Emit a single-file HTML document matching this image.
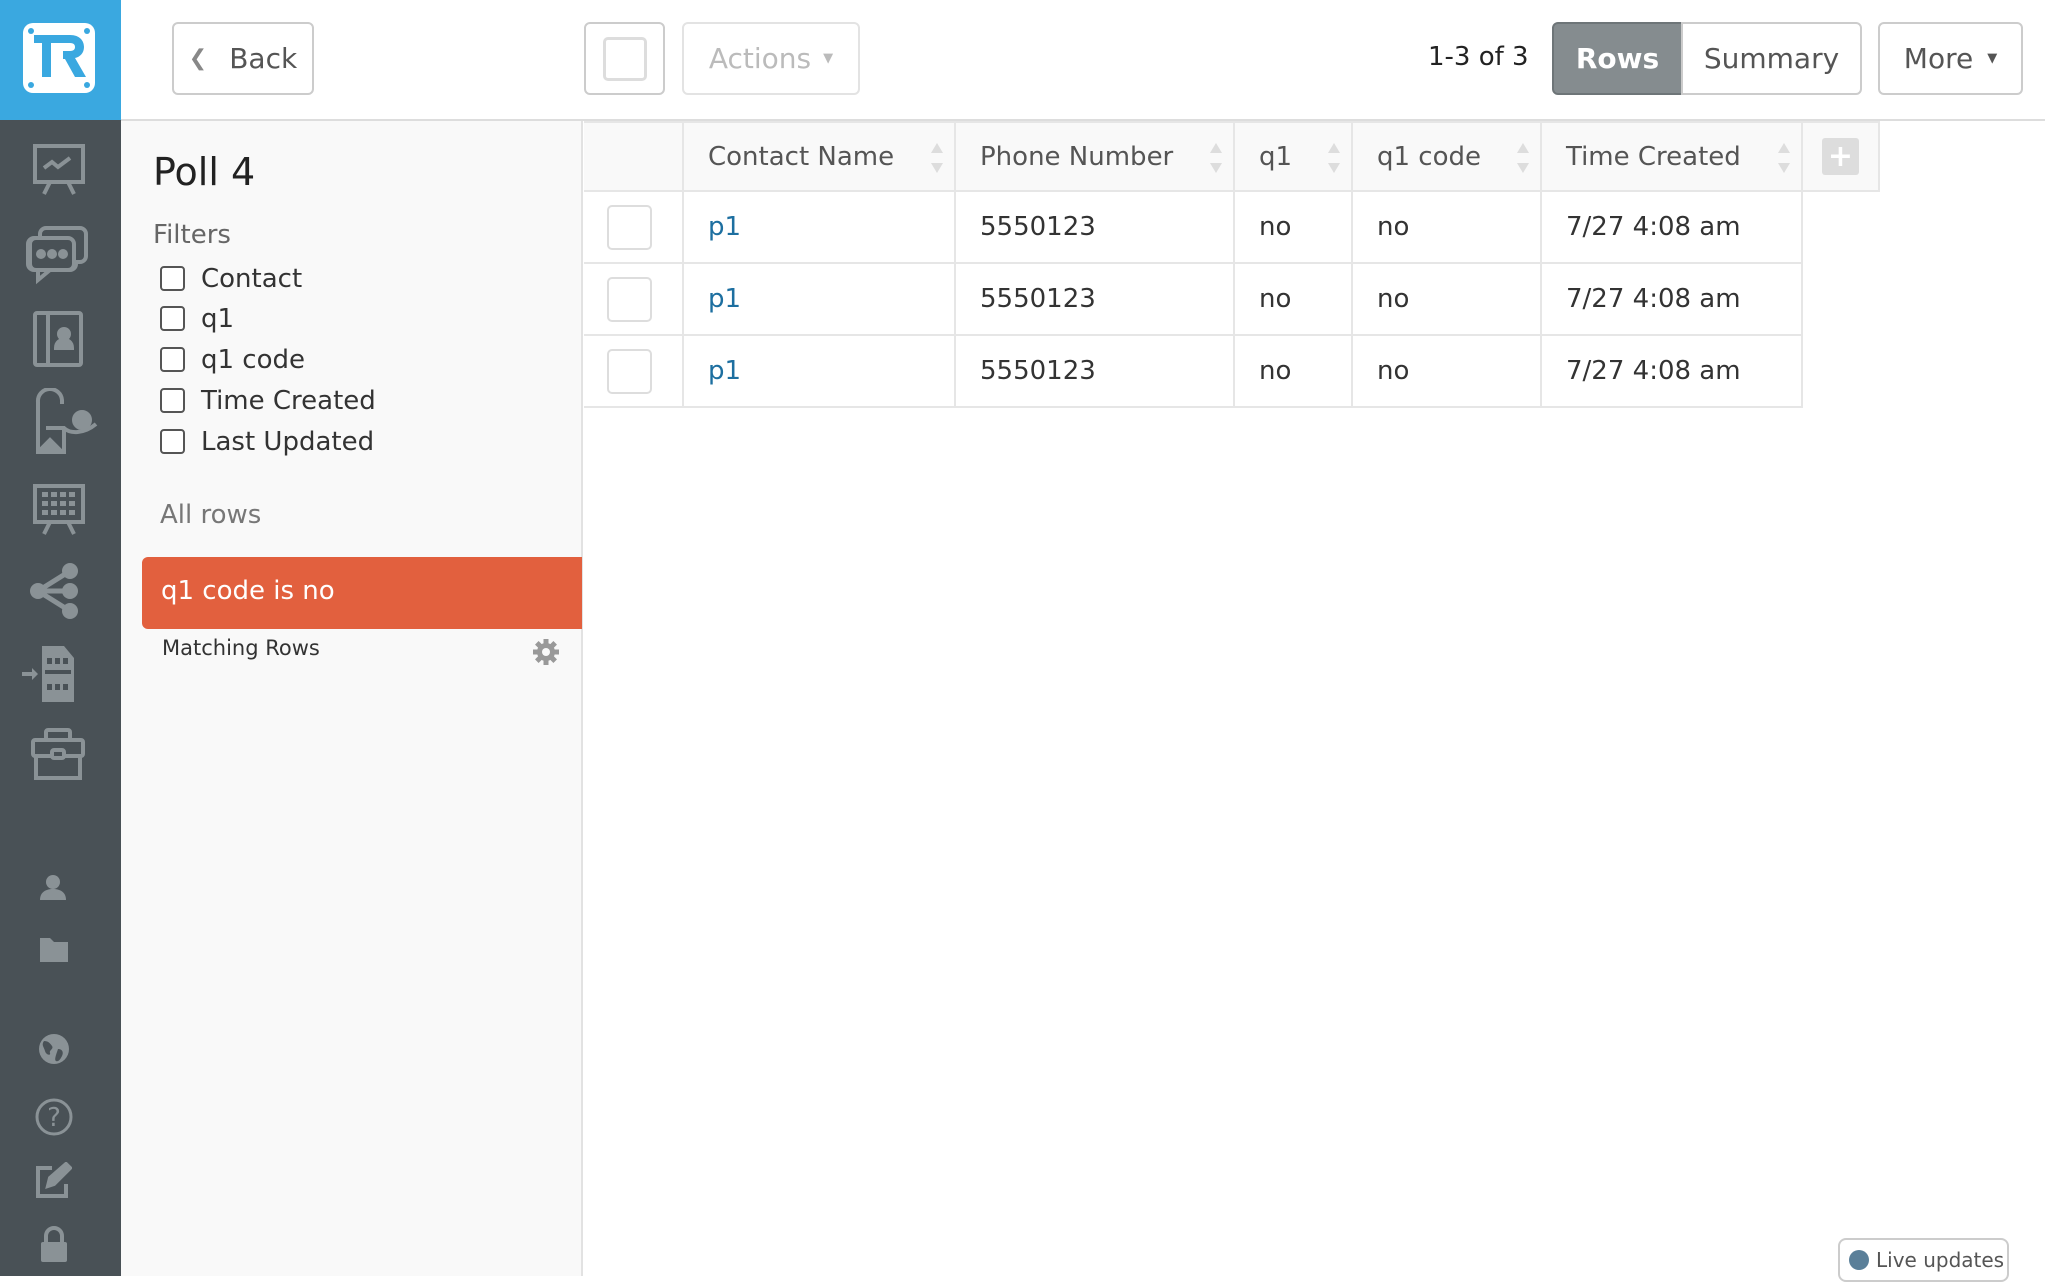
<!DOCTYPE html>
<html><head><meta charset="utf-8"><style>
*{box-sizing:border-box;margin:0;padding:0}
body{width:2045px;height:1276px;overflow:hidden;background:#fff;font-family:"DejaVu Sans","Liberation Sans",sans-serif;color:#333;position:relative}
.abs{position:absolute}
#side{left:0;top:0;width:121px;height:1276px;background:#495156}
#logo{left:0;top:0;width:121px;height:120px;background:#3aa8e0}
#hdr{left:121px;top:0;right:0;height:121px;border-bottom:2px solid #ddd;background:#fff}
.btn{position:absolute;border:2px solid #ccc;border-radius:6px;background:#fff;font-size:28px;color:#555;display:flex;align-items:center;justify-content:center;white-space:nowrap}
#left{left:121px;top:121px;width:462px;height:1155px;background:#f9f9f9;border-right:2px solid #e2e2e2}
.cb{position:absolute;width:25px;height:25px;border:2px solid #555;border-radius:4px;background:#fff}
.fl{position:absolute;font-size:26px;color:#333;white-space:nowrap}
table{position:absolute;left:584px;top:121px;border-collapse:collapse;font-size:26px}
td,th{border:2px solid #e6e6e6;padding:0 0 0 24px;text-align:left;font-weight:normal;white-space:nowrap}
th{height:69px;background:#f9f9f9;color:#555;position:relative}
td{height:72px;color:#333}
.sort{position:absolute;right:10px;top:18px;width:14px;height:34px}
.rcb{width:45px;height:45px;border:2px solid #ddd;border-radius:5px;margin-left:-1px}
a{color:#1d6fa0;text-decoration:none}
svg{position:absolute}
</style></head><body>
<div id="side" class="abs"></div>
<div id="logo" class="abs">
<svg style="left:22px;top:22px" width="74" height="72" viewBox="0 0 74 72"><rect x="1" y="1" width="72" height="70" rx="10" fill="#fff"/><circle cx="9" cy="9" r="3" fill="#3aa8e0"/><circle cx="65" cy="9" r="3" fill="#3aa8e0"/><circle cx="9" cy="63" r="3" fill="#3aa8e0"/><circle cx="65" cy="63" r="3" fill="#3aa8e0"/><path d="M12 13h26v8h-9v34h-9V21h-8z" fill="#3aa8e0"/><path d="M34 13h14c10 0 14 6 14 12 0 6-4 10-9 11l11 19H53L43 37h-2v-8h7c4 0 5-2 5-4s-1-4-5-4H34z" fill="#3aa8e0"/></svg>
</div>
<svg style="left:30px;top:142px" width="58" height="56" viewBox="0 0 58 56" fill="none" stroke="#8a9296" stroke-width="4"><rect x="5" y="4" width="48" height="36"/><path d="M14 26l8-6 6 5 12-9M20 40l-6 12M38 40l6 12"/></svg>
<svg style="left:26px;top:224px" width="64" height="62" viewBox="0 0 64 62" fill="none" stroke="#8a9296" stroke-width="4"><rect x="14" y="4" width="46" height="34" rx="6"/><path d="M10 14h-2a6 6 0 0 0-6 6v20a6 6 0 0 0 6 6h4v10l12-10h20a6 6 0 0 0 6-6" fill="#495156"/><rect x="4" y="14" width="44" height="32" rx="6" fill="#495156"/><circle cx="15" cy="30" r="3" fill="#8a9296"/><circle cx="26" cy="30" r="3" fill="#8a9296"/><circle cx="37" cy="30" r="3" fill="#8a9296"/></svg>
<svg style="left:32px;top:310px" width="52" height="58" viewBox="0 0 52 58" fill="none" stroke="#8a9296" stroke-width="4"><rect x="3" y="3" width="46" height="52" rx="2"/><path d="M16 3v52"/><circle cx="32" cy="24" r="5" fill="#8a9296"/><path d="M24 38c0-6 4-8 8-8s8 2 8 8z" fill="#8a9296"/></svg>
<svg style="left:32px;top:388px" width="68" height="66" viewBox="0 0 68 66" fill="none" stroke="#8a9296" stroke-width="4"><path d="M20 64H6V14a12 12 0 0 1 24-2v4"/><path d="M6 64h26V40" /><circle cx="50" cy="32" r="8" fill="#8a9296"/><path d="M14 40h18c6 6 20 6 32-4"/><path d="M10 60l8-8 8 8z" fill="#8a9296"/></svg>
<svg style="left:30px;top:482px" width="58" height="56" viewBox="0 0 58 56" fill="none" stroke="#8a9296" stroke-width="4"><rect x="5" y="4" width="48" height="36"/><path d="M20 40l-6 12M38 40l6 12"/><g fill="#8a9296" stroke="none"><rect x="12" y="10" width="6" height="5"/><rect x="21" y="10" width="6" height="5"/><rect x="30" y="10" width="6" height="5"/><rect x="39" y="10" width="6" height="5"/><rect x="12" y="19" width="6" height="5"/><rect x="21" y="19" width="6" height="5"/><rect x="30" y="19" width="6" height="5"/><rect x="39" y="19" width="6" height="5"/><rect x="12" y="28" width="6" height="5"/><rect x="21" y="28" width="6" height="5"/><rect x="30" y="28" width="6" height="5"/><rect x="39" y="28" width="6" height="5"/></g></svg>
<svg style="left:28px;top:562px" width="56" height="58" viewBox="0 0 56 58" fill="#8a9296"><circle cx="10" cy="29" r="8"/><circle cx="42" cy="9" r="8"/><circle cx="42" cy="29" r="8"/><circle cx="42" cy="49" r="8"/><path d="M10 29L42 9M10 29h32M10 29l32 20" stroke="#8a9296" stroke-width="5"/></svg>
<svg style="left:20px;top:644px" width="60" height="60" viewBox="0 0 60 60" fill="#8a9296"><path d="M22 2h22l10 12v44H22z"/><g fill="#495156"><rect x="27" y="14" width="5" height="6"/><rect x="35" y="14" width="5" height="6"/><rect x="43" y="14" width="5" height="6"/><rect x="25" y="26" width="26" height="4"/><rect x="27" y="40" width="5" height="6"/><rect x="35" y="40" width="5" height="6"/><rect x="43" y="40" width="5" height="6"/></g><path d="M2 28h10v-4l6 6-6 6v-4H2z"/></svg>
<svg style="left:30px;top:726px" width="56" height="56" viewBox="0 0 56 56" fill="none" stroke="#8a9296" stroke-width="4"><rect x="16" y="4" width="24" height="10" rx="2"/><rect x="3" y="14" width="50" height="16" rx="2"/><path d="M6 30v22h44V30"/><rect x="22" y="24" width="12" height="8" rx="2" fill="#495156"/></svg>
<svg style="left:40px;top:874px" width="26" height="26" viewBox="0 0 26 26" fill="#8a9296"><circle cx="13" cy="8" r="7"/><path d="M0 26c0-8 6-11 13-11s13 3 13 11z"/></svg>
<svg style="left:40px;top:938px" width="28" height="24" viewBox="0 0 28 24" fill="#8a9296"><path d="M0 0h10l4 4h14v20H0z"/></svg>
<svg style="left:38px;top:1033px" width="32" height="32" viewBox="0 0 32 32"><circle cx="16" cy="16" r="15" fill="#8a9296"/><path d="M6 8c4 0 6 2 8 5s-3 4-2 7-4 2-5-2-4-6-1-10zM20 16c4 0 6 3 4 7s-4 6-6 5 0-6 2-12z" fill="#495156"/></svg>
<svg style="left:34px;top:1097px" width="40" height="40" viewBox="0 0 40 40"><circle cx="20" cy="20" r="17" fill="none" stroke="#8a9296" stroke-width="3"/><text x="20" y="29" font-size="26" text-anchor="middle" fill="#8a9296" font-family="DejaVu Sans">?</text></svg>
<svg style="left:36px;top:1162px" width="36" height="36" viewBox="0 0 36 36" fill="none" stroke="#8a9296" stroke-width="4"><path d="M16 6H2v28h28V22"/><path d="M12 24l2-8L30 2l4 4-16 16z" fill="#8a9296"/></svg>
<svg style="left:40px;top:1226px" width="28" height="36" viewBox="0 0 28 36"><path d="M6 16v-6a8 8 0 0 1 16 0v6" fill="none" stroke="#8a9296" stroke-width="4"/><rect x="1" y="16" width="26" height="20" rx="2" fill="#8a9296"/></svg>

<div id="hdr" class="abs"></div>
<div class="btn" style="left:172px;top:22px;width:142px;height:73px"><span style="color:#888;font-size:22px;margin-right:22px;font-weight:bold">&#10094;</span>Back</div>
<div class="btn" style="left:584px;top:22px;width:81px;height:73px"><div style="width:44px;height:44px;border:3px solid #ddd;border-radius:5px"></div></div>
<div class="btn" style="left:682px;top:22px;width:178px;height:73px;border-color:#e3e3e3;color:#bbb">Actions <span style="font-size:13px;margin-left:12px">&#9660;</span></div>
<div class="abs" style="left:1428px;top:42px;font-size:26px;color:#222">1-3 of 3</div>
<div class="btn" style="left:1552px;top:22px;width:131px;height:73px;background:#858c8f;border-color:#6e7578;color:#fff;font-weight:bold;border-radius:6px 0 0 6px">Rows</div>
<div class="btn" style="left:1681px;top:22px;width:181px;height:73px;border-radius:0 6px 6px 0">Summary</div>
<div class="btn" style="left:1878px;top:22px;width:145px;height:73px">More <span style="font-size:13px;margin-left:14px">&#9660;</span></div>

<div id="left" class="abs"></div>
<div class="abs" style="left:153px;top:150px;font-size:38px;color:#222">Poll 4</div>
<div class="abs" style="left:153px;top:220px;font-size:26px;color:#666">Filters</div>
<div class="cb" style="left:160px;top:266px"></div><div class="fl" style="left:201px;top:264px">Contact</div>
<div class="cb" style="left:160px;top:306px"></div><div class="fl" style="left:201px;top:304px">q1</div>
<div class="cb" style="left:160px;top:347px"></div><div class="fl" style="left:201px;top:345px">q1 code</div>
<div class="cb" style="left:160px;top:388px"></div><div class="fl" style="left:201px;top:386px">Time Created</div>
<div class="cb" style="left:160px;top:429px"></div><div class="fl" style="left:201px;top:427px">Last Updated</div>
<div class="abs" style="left:160px;top:500px;font-size:26px;color:#777">All rows</div>
<div class="abs" style="left:142px;top:557px;width:440px;height:72px;background:#e2603e;border-radius:6px 0 0 6px;color:#fff;font-size:26px;padding:19px 0 0 19px">q1 code is no</div>
<div class="abs" style="left:162px;top:636px;font-size:21px;color:#333">Matching Rows</div>
<svg style="left:532px;top:638px" width="28" height="28" viewBox="0 0 28 28"><g fill="#999"><circle cx="14" cy="14" r="9"/><g stroke="#999" stroke-width="5"><path d="M14 1v26M1 14h26M4.8 4.8l18.4 18.4M23.2 4.8L4.8 23.2"/></g></g><circle cx="14" cy="14" r="4" fill="#f9f9f9"/></svg>

<table>
<tr><th style="width:99px;border-left:none"></th><th style="width:272px">Contact Name<svg class="sort" viewBox="0 0 14 34"><path d="M7 2l6 10H1zM7 32l6-10H1z" fill="#ddd"/></svg></th><th style="width:279px">Phone Number<svg class="sort" viewBox="0 0 14 34"><path d="M7 2l6 10H1zM7 32l6-10H1z" fill="#ddd"/></svg></th><th style="width:118px">q1<svg class="sort" viewBox="0 0 14 34"><path d="M7 2l6 10H1zM7 32l6-10H1z" fill="#ddd"/></svg></th><th style="width:189px">q1 code<svg class="sort" viewBox="0 0 14 34"><path d="M7 2l6 10H1zM7 32l6-10H1z" fill="#ddd"/></svg></th><th style="width:261px">Time Created<svg class="sort" viewBox="0 0 14 34"><path d="M7 2l6 10H1zM7 32l6-10H1z" fill="#ddd"/></svg></th><th style="width:77px;padding:0"><div style="width:37px;height:37px;background:#ddd;border-radius:3px;margin:auto;color:#fff;font-size:30px;font-weight:bold;line-height:37px;text-align:center">+</div></th></tr>
<tr><td style="border-left:none"><div class="rcb"></div></td><td><a>p1</a></td><td>5550123</td><td>no</td><td>no</td><td>7/27 4:08 am</td><td style="border:none"></td></tr>
<tr><td style="border-left:none"><div class="rcb"></div></td><td><a>p1</a></td><td>5550123</td><td>no</td><td>no</td><td>7/27 4:08 am</td><td style="border:none"></td></tr>
<tr><td style="border-left:none"><div class="rcb"></div></td><td><a>p1</a></td><td>5550123</td><td>no</td><td>no</td><td>7/27 4:08 am</td><td style="border:none"></td></tr>
</table>

<div class="abs" style="left:1838px;top:1238px;width:171px;height:44px;border:2px solid #ccc;border-radius:8px;background:#fff;font-size:20px;color:#555;padding:8px 0 0 9px;display:flex;align-items:flex-start;white-space:nowrap"><span style="display:inline-block;width:20px;height:20px;border-radius:50%;background:#5a7f99;margin:2px 7px 0 0;flex:none"></span>Live updates</div>
</body></html>
